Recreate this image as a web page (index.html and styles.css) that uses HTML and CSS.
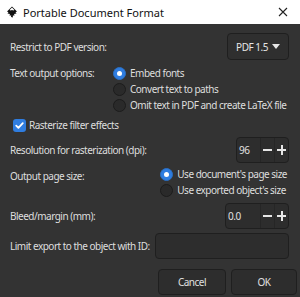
FILE: index.html
```html
<!DOCTYPE html>
<html>
<head>
<meta charset="utf-8">
<link rel="stylesheet" href="styles.css">
</head>
<body>
<div class="window">
  <div class="titlebar">
    <svg class="app-icon" width="12" height="12" viewBox="0 0 12 12">
      <path d="M6 0.5 L11 5.5 L9.5 6.2 L10.5 7.6 L8 8 L8.6 9.4 L6.8 9.6 L6.9 11.5 L5 11 L5.2 9.6 L3.4 9.4 L4 8 L1.5 7.6 L2.5 6.2 L1 5.5 Z" fill="#111"/>
      <path d="M6 1.6 L8.4 4 L7.2 4.6 L6 3.9 L4.8 4.6 L3.6 4 Z" fill="#fff"/>
    </svg>
    <span class="title">Portable Document Format</span>
    <svg class="close" width="10" height="10" viewBox="0 0 10 10">
      <path d="M1 1 L9 9 M9 1 L1 9" stroke="#222" stroke-width="1.1"/>
    </svg>
  </div>
  <div class="content">
    <div class="row row-version">
      <span class="label">Restrict to PDF version:</span>
      <div class="dropdown">PDF 1.5 <span class="caret"></span></div>
    </div>

    <div class="row row-text">
      <span class="label">Text output options:</span>
      <div class="radio-group">
        <div class="radio-item"><span class="radio checked"></span>Embed fonts</div>
        <div class="radio-item"><span class="radio"></span>Convert text to paths</div>
        <div class="radio-item"><span class="radio"></span>Omit text in PDF and create LaTeX file</div>
      </div>
    </div>

    <div class="row row-check">
      <span class="checkbox">
        <svg width="13" height="13" viewBox="0 0 13 13"><path d="M3.2 6.6 L5.4 8.8 L9.8 4.2" fill="none" stroke="#fff" stroke-width="1.8" stroke-linecap="round" stroke-linejoin="round"/></svg>
      </span>
      <span class="check-label">Rasterize filter effects</span>
    </div>

    <div class="row row-res">
      <span class="label">Resolution for rasterization (dpi):</span>
      <div class="spin spin-res">
        <span class="spin-value">96</span>
        <span class="spin-btn minus"></span>
        <span class="spin-btn plus"></span>
      </div>
    </div>

    <div class="row row-page">
      <span class="label">Output page size:</span>
      <div class="radio-group page-group">
        <div class="radio-item"><span class="radio checked"></span>Use document's page size</div>
        <div class="radio-item"><span class="radio"></span>Use exported object's size</div>
      </div>
    </div>

    <div class="row row-bleed">
      <span class="label">Bleed/margin (mm):</span>
      <div class="spin spin-bleed">
        <span class="spin-value">0.0</span>
        <span class="spin-btn minus"></span>
        <span class="spin-btn plus"></span>
      </div>
    </div>

    <div class="row row-limit">
      <span class="label">Limit export to the object with ID:</span>
      <div class="entry"></div>
    </div>

    <div class="buttons">
      <div class="btn btn-cancel">Cancel</div>
      <div class="btn btn-ok">OK</div>
    </div>
  </div>
</div>
</body>
</html>
```

FILE: styles.css
```css
html, body {
  margin: 0;
  padding: 0;
  background: #333333;
}
.window {
  width: 300px;
  height: 297px;
  display: flex;
  flex-direction: column;
  font-family: "Noto Sans", "DejaVu Sans", sans-serif;
  overflow: hidden;
}
.titlebar {
  height: 24px;
  background: #ffffff;
  display: flex;
  align-items: center;
  padding-left: 6px;
  padding-right: 12px;
  box-sizing: border-box;
}
.app-icon {
  flex: none;
}
.title {
  margin-left: 5px;
  font-size: 11px;
  color: #111;
  flex: 1;
}
.close {
  flex: none;
}
.content {
  flex: 1;
  background: #333333;
  color: #dedede;
  font-size: 10px;
  letter-spacing: -0.5px;
  padding: 10px 11px 0 10px;
  display: flex;
  flex-direction: column;
}
.row {
  display: flex;
  align-items: center;
  justify-content: space-between;
}
.label {
  white-space: nowrap;
  flex: none;
}
.row-version {
  margin-top: -1px;
}
.dropdown {
  width: 62px;
  height: 27px;
  box-sizing: border-box;
  border: 1px solid #1f1f1f;
  border-radius: 4px;
  background: #2f2f2f;
  display: flex;
  align-items: center;
  justify-content: center;
  gap: 4px;
  color: #e6e6e6;
}
.caret {
  width: 0;
  height: 0;
  border-left: 4px solid transparent;
  border-right: 4px solid transparent;
  border-top: 5px solid #e6e6e6;
}
.row-text {
  align-items: flex-start;
  justify-content: flex-start;
  margin-top: 5px;
}
.row-text .label {
  width: 103px;
  margin-top: 1px;
}
.radio-group {
  display: flex;
  flex-direction: column;
}
.radio-item {
  display: flex;
  align-items: center;
  height: 16px;
  white-space: nowrap;
}
.radio {
  width: 13px;
  height: 13px;
  box-sizing: border-box;
  border-radius: 50%;
  border: 1px solid #1c1c1c;
  background: #2a2a2a;
  margin-right: 4px;
  flex: none;
  position: relative;
}
.radio.checked {
  background: #2f7de0;
  border-color: #2a6fc4;
}
.radio.checked::after {
  content: "";
  position: absolute;
  left: 3px;
  top: 3px;
  width: 5px;
  height: 5px;
  border-radius: 50%;
  background: #fff;
}
.row-check {
  justify-content: flex-start;
  margin-top: 5px;
  padding-left: 3px;
}
.checkbox {
  width: 13px;
  height: 13px;
  border-radius: 3px;
  background: #2f7de0;
  display: flex;
}
.check-label {
  margin-left: 3px;
}
.row-res {
  margin-top: 5px;
}
.spin {
  height: 26px;
  box-sizing: border-box;
  border: 1px solid #1f1f1f;
  border-radius: 4px;
  background: #2d2d2d;
  display: flex;
  align-items: stretch;
}
.spin-res { width: 53px; }
.spin-bleed { width: 64px; }
.spin-value {
  flex: 1;
  display: flex;
  align-items: center;
  padding-left: 2px;
  color: #e0e0e0;
}
.spin-btn {
  width: 13px;
  border-left: 1px solid #262626;
  position: relative;
}
.spin-btn::before {
  content: "";
  position: absolute;
  left: 2px;
  top: 11px;
  width: 9px;
  height: 2px;
  background: #e6e6e6;
}
.spin-btn.plus::after {
  content: "";
  position: absolute;
  left: 5.5px;
  top: 7px;
  width: 2px;
  height: 10px;
  background: #e6e6e6;
}
.row-page {
  align-items: flex-start;
  margin-top: 3px;
}
.row-page .label {
  margin-top: 3px;
}
.page-group {
  margin-right: 2px;
}
.row-bleed {
  margin-top: 5px;
}
.row-limit {
  margin-top: 4px;
}
.entry {
  width: 134px;
  height: 26px;
  box-sizing: border-box;
  border: 1px solid #1f1f1f;
  border-radius: 4px;
  background: #2d2d2d;
}
.buttons {
  display: flex;
  justify-content: flex-end;
  gap: 5px;
  margin-top: 10px;
  margin-right: -8px;
}
.btn {
  height: 26px;
  box-sizing: border-box;
  border: 1px solid #1f1f1f;
  border-radius: 4px;
  background: #2d2d2d;
  display: flex;
  align-items: center;
  justify-content: center;
  color: #e0e0e0;
}
.btn-cancel { width: 68px; }
.btn-ok { width: 66px; }
```
